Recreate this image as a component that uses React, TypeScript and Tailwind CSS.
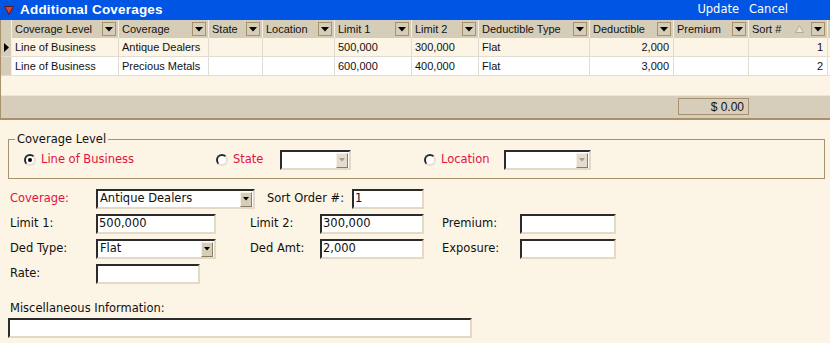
const cols = [
  { title: "Coverage Level", w: "w-[107px]" },
  { title: "Coverage", w: "w-[90px]" },
  { title: "State", w: "w-[54px]" },
  { title: "Location", w: "w-[72px]" },
  { title: "Limit 1", w: "w-[77px]" },
  { title: "Limit 2", w: "w-[67px]" },
  { title: "Deductible Type", w: "w-[111px]" },
  { title: "Deductible", w: "w-[84px]", right: true },
  { title: "Premium", w: "w-[75px]" },
  { title: "Sort #", w: "w-[79px]", right: true, sort: true },
];

const rows = [
  { bg: "bg-[#fcf4e4]", cells: ["Line of Business", "Antique Dealers", "", "", "500,000", "300,000", "Flat", "2,000", "", "1"] },
  { bg: "bg-white", cells: ["Line of Business", "Precious Metals", "", "", "600,000", "400,000", "Flat", "3,000", "", "2"] },
];

function DropBtn({ disabled }: { disabled?: boolean }) {
  return (
    <span
      className={
        "flex h-[15px] w-[12px] shrink-0 items-center justify-center border border-t-[#f4f0e6] border-l-[#f4f0e6] border-b-[#8c7c62] border-r-[#8c7c62] " +
        (disabled ? "bg-[#e4ddcf]" : "bg-[#d6cdb9]")
      }
    >
      <svg width="6" height="4" viewBox="0 0 6 4">
        <path d="M0 0h6L3 3.5z" fill={disabled ? "#a89c88" : "#000"} />
      </svg>
    </span>
  );
}

function HeadBtn() {
  return (
    <span className="absolute right-[2px] top-[2px] flex h-[14px] w-[14px] items-center justify-center border border-[#a8916d] bg-[#d6cdb9]">
      <svg width="8" height="5" viewBox="0 0 8 5">
        <path d="M0 0h8L4 4.5z" fill="#000" />
      </svg>
    </span>
  );
}

const sunken =
  "h-[20px] border-2 border-t-[#2b2b2b] border-l-[#2b2b2b] border-b-[#e2d9c6] border-r-[#e2d9c6] bg-white flex items-center";

function Input({ w, value }: { w: string; value?: string }) {
  return <div className={sunken + " pl-[1px] " + w}>{value}</div>;
}

function Select({ w, value, disabled }: { w: string; value?: string; disabled?: boolean }) {
  return (
    <div className={sunken + " justify-between pl-[2px] pr-[1px] " + w}>
      <span>{value}</span>
      <DropBtn disabled={disabled} />
    </div>
  );
}

function Radio({ checked }: { checked?: boolean }) {
  return (
    <span className="flex h-[12px] w-[12px] shrink-0 items-center justify-center rounded-full border-2 border-t-[#2b2b2b] border-l-[#2b2b2b] border-b-[#e8e0ce] border-r-[#e8e0ce] bg-white">
      {checked && <span className="h-[4px] w-[4px] rounded-full bg-black" />}
    </span>
  );
}

export default function App() {
  return (
    <div className="h-[343px] w-[830px] overflow-hidden bg-[#fcf4e4] font-['DejaVu_Sans',Verdana,sans-serif] text-[11.5px] text-[#111]">
      {/* grid panel */}
      <div className="border-b-2 border-[#a8916d]">
        <div className="flex h-[20px] items-center bg-[#0055e5] text-white">
          <svg className="ml-[4px]" width="10" height="9" viewBox="0 0 10 9">
            <path d="M0.5 0.5h9L5 8.5z" fill="#d24040" stroke="#5a1a1a" strokeWidth="1" />
          </svg>
          <span className="ml-[6px] font-['Liberation_Sans',Arial,sans-serif] text-[13.5px] font-bold tracking-[0.2px]">
            Additional Coverages
          </span>
          <span className="ml-auto mr-[42px] flex gap-[10px]">
            <span>Update</span>
            <span>Cancel</span>
          </span>
        </div>

        <div className="border-l border-[#a8916d] font-['Liberation_Sans',Arial,sans-serif] text-[11px]">
          <div className="flex h-[18px] bg-[#d6cdb9]">
            <div className="w-[11px] shrink-0 border-r border-[#f4f0e6]" />
            {cols.map((c) => (
              <div key={c.title} className={"relative flex shrink-0 items-center border-r border-[#f4f0e6] pl-[3px] " + c.w}>
                {c.title}
                {c.sort && (
                  <svg className="absolute right-[23px] top-[5px]" width="9" height="8" viewBox="0 0 9 8">
                    <path d="M4.5 0.5L8.5 7.5H0.5z" fill="#ebe5d8" stroke="#b4aa98" strokeWidth="1" />
                  </svg>
                )}
                <HeadBtn />
              </div>
            ))}
          </div>
          {rows.map((r, i) => (
            <div key={i} className={"flex h-[19px] border-b border-[#e2ddd2] " + r.bg}>
              <div className="flex w-[11px] shrink-0 items-center border-r border-[#f4f0e6] bg-[#d6cdb9] pl-[3px]">
                {i === 0 && (
                  <svg width="5" height="9" viewBox="0 0 5 9">
                    <path d="M0 0l5 4.5L0 9z" fill="#000" />
                  </svg>
                )}
              </div>
              {cols.map((c, j) => (
                <div
                  key={c.title}
                  className={
                    "flex shrink-0 items-center border-r border-[#e2ddd2] " +
                    (c.right ? "justify-end pr-[4px] " : "pl-[3px] ") +
                    c.w
                  }
                >
                  {r.cells[j]}
                </div>
              ))}
            </div>
          ))}
          <div className="h-[19px] bg-[#fcf4e4]" />
          <div className="flex h-[23px] items-start justify-end border-t border-[#ece6da] bg-[#d6cdbb] pr-[81px] pt-[2px]">
            <div className="flex h-[17px] w-[71px] items-center justify-end border border-[#a8916d] pr-[4px] text-[12px]">
              $ 0.00
            </div>
          </div>
        </div>
      </div>

      {/* form */}
      <div className="px-[8px]">
        <fieldset className="mt-[12px] h-[47px] w-[817px] border border-[#a8916d]">
          <legend className="ml-[6px] px-[2px] leading-[14px]">Coverage Level</legend>
          <div className="mt-[4px] flex h-[20px] items-center pl-[15px]">
            <div className="flex w-[192px] items-center gap-[5px]">
              <Radio checked />
              <span className="text-[#e31240]">Line of Business</span>
            </div>
            <div className="flex w-[208px] items-center">
              <Radio />
              <span className="ml-[5px] w-[47px] text-[#e31240]">State</span>
              <Select w="w-[71px]" disabled />
            </div>
            <div className="flex items-center">
              <Radio />
              <span className="ml-[5px] w-[63px] text-[#e31240]">Location</span>
              <Select w="w-[87px]" disabled />
            </div>
          </div>
        </fieldset>

        <div className="mt-[10px] flex flex-col gap-[5px] pl-[2px]">
          <div className="flex items-center">
            <span className="w-[86px] text-[#e31240]">Coverage:</span>
            <Select w="w-[159px]" value="Antique Dealers" />
            <span className="ml-[12px] w-[85px]">Sort Order #:</span>
            <Input w="w-[72px]" value="1" />
          </div>
          <div className="flex items-center">
            <span className="w-[86px]">Limit 1:</span>
            <Input w="w-[120px]" value="500,000" />
            <span className="ml-[34px] w-[70px]">Limit 2:</span>
            <Input w="w-[104px]" value="300,000" />
            <span className="ml-[18px] w-[78px]">Premium:</span>
            <Input w="w-[96px]" />
          </div>
          <div className="flex items-center">
            <span className="w-[86px]">Ded Type:</span>
            <Select w="w-[120px]" value="Flat" />
            <span className="ml-[34px] w-[70px]">Ded Amt:</span>
            <Input w="w-[104px]" value="2,000" />
            <span className="ml-[18px] w-[78px]">Exposure:</span>
            <Input w="w-[96px]" />
          </div>
          <div className="flex items-center">
            <span className="w-[86px]">Rate:</span>
            <Input w="w-[104px]" />
          </div>
        </div>

        <div className="mt-[17px] pl-[2px] leading-[14px]">Miscellaneous Information:</div>
        <div className="mt-[3px]">
          <Input w="w-[464px]" />
        </div>
      </div>
    </div>
  );
}
